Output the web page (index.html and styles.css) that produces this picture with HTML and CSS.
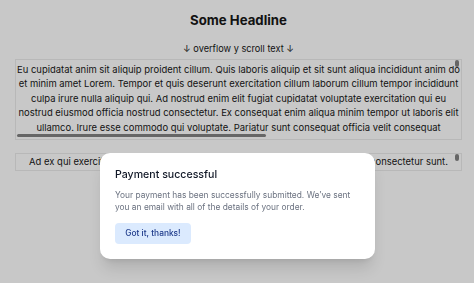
FILE: index.html
```html
<!DOCTYPE html>
<html lang="en">
<head>
<meta charset="utf-8">
<title>Some Headline</title>
<link rel="stylesheet" href="styles.css">
</head>
<body>
<main class="page">
  <h1 class="headline">Some Headline</h1>
  <p class="label">↓ overflow y scroll text ↓</p>
  <div class="scroll-box box-tall">
    <p class="scroll-text">Eu cupidatat anim sit aliquip proident cillum. Quis laboris aliquip et sit sunt aliqua incididunt anim do<br>et minim amet Lorem. Tempor et quis deserunt exercitation cillum laborum cillum tempor incididunt<br>culpa irure nulla aliquip qui. Ad nostrud enim elit fugiat cupidatat voluptate exercitation qui eu<br>nostrud eiusmod officia nostrud consectetur. Ex consequat enim aliqua minim tempor ut laboris elit<br>ullamco. Irure esse commodo qui voluptate. Pariatur sunt consequat officia velit consequat</p>
    <span class="thumb thumb-v"></span>
    <span class="thumb thumb-h"></span>
  </div>
  <div class="scroll-box box-short">
    <p class="scroll-text">Ad ex qui exercitation nulla irure in labore elit est cupidatat proident enim do consectetur sunt.</p>
    <span class="thumb thumb-v"></span>
  </div>
</main>
<div class="dialog-layer">
  <section class="dialog" role="dialog" aria-labelledby="dlg-title">
    <h2 class="dialog-title" id="dlg-title">Payment successful</h2>
    <p class="dialog-text">Your payment has been successfully submitted. We’ve sent you an email with all of the details of your order.</p>
    <button class="dialog-button" type="button">Got it, thanks!</button>
  </section>
</div>
</body>
</html>
```

FILE: styles.css
```css
* { box-sizing: border-box; }
html, body { margin: 0; padding: 0; }
body {
  background: #c8c8c8;
  font-family: Inter, "Noto Sans", sans-serif;
  color: #121212;
  width: 474px;
  height: 283px;
  overflow: hidden;
}
.page {
  display: flex;
  flex-direction: column;
  padding: 12px 12px 0 15px;
}
.headline {
  margin: 0;
  text-align: center;
  font-size: 13.2px;
  line-height: 16px;
  font-weight: 700;
}
.label {
  margin: 14px 0 0;
  text-align: center;
  font-size: 9.2px;
  line-height: 14px;
}
.scroll-box {
  position: relative;
  border: 1px solid #b8b8b8;
  overflow: hidden;
}
.box-tall {
  margin-top: 3px;
  height: 81px;
  padding-top: 3px;
}
.box-short {
  margin-top: 13px;
  height: 18px;
  padding-top: 1px;
}
.scroll-text {
  margin: 0;
  text-align: center;
  font-size: 9.45px;
  line-height: 14.4px;
  white-space: nowrap;
}
.thumb {
  position: absolute;
  background: #666;
  border-radius: 3px;
}
.thumb-v {
  top: 0;
  right: 2px;
  width: 4px;
  height: 7px;
}
.thumb-h {
  left: 1px;
  bottom: 2px;
  width: 249px;
  height: 3px;
}
.dialog-layer {
  position: fixed;
  inset: 0;
  display: flex;
  justify-content: center;
  align-items: flex-start;
  padding-top: 153px;
}
.dialog {
  width: 275px;
  background: #fff;
  border-radius: 10px;
  padding: 14.4px 14.4px 14.4px 15.5px;
  box-shadow: 0 12px 15px -3px rgba(0,0,0,0.12), 0 5px 6px -4px rgba(0,0,0,0.1);
}
.dialog-title {
  margin: 0;
  font-size: 10.6px;
  line-height: 16.8px;
  font-weight: 500;
  color: #111827;
}
.dialog-text {
  margin: 4.8px 0 0;
  font-size: 8.4px;
  line-height: 12px;
  color: #6b7280;
}
.dialog-button {
  margin-top: 9.6px;
  border: 0;
  border-radius: 4px;
  background: #dbeafe;
  color: #1e3a8a;
  font-family: inherit;
  font-size: 8.4px;
  line-height: 12px;
  font-weight: 500;
  padding: 4.8px 10.2px;
}
```
